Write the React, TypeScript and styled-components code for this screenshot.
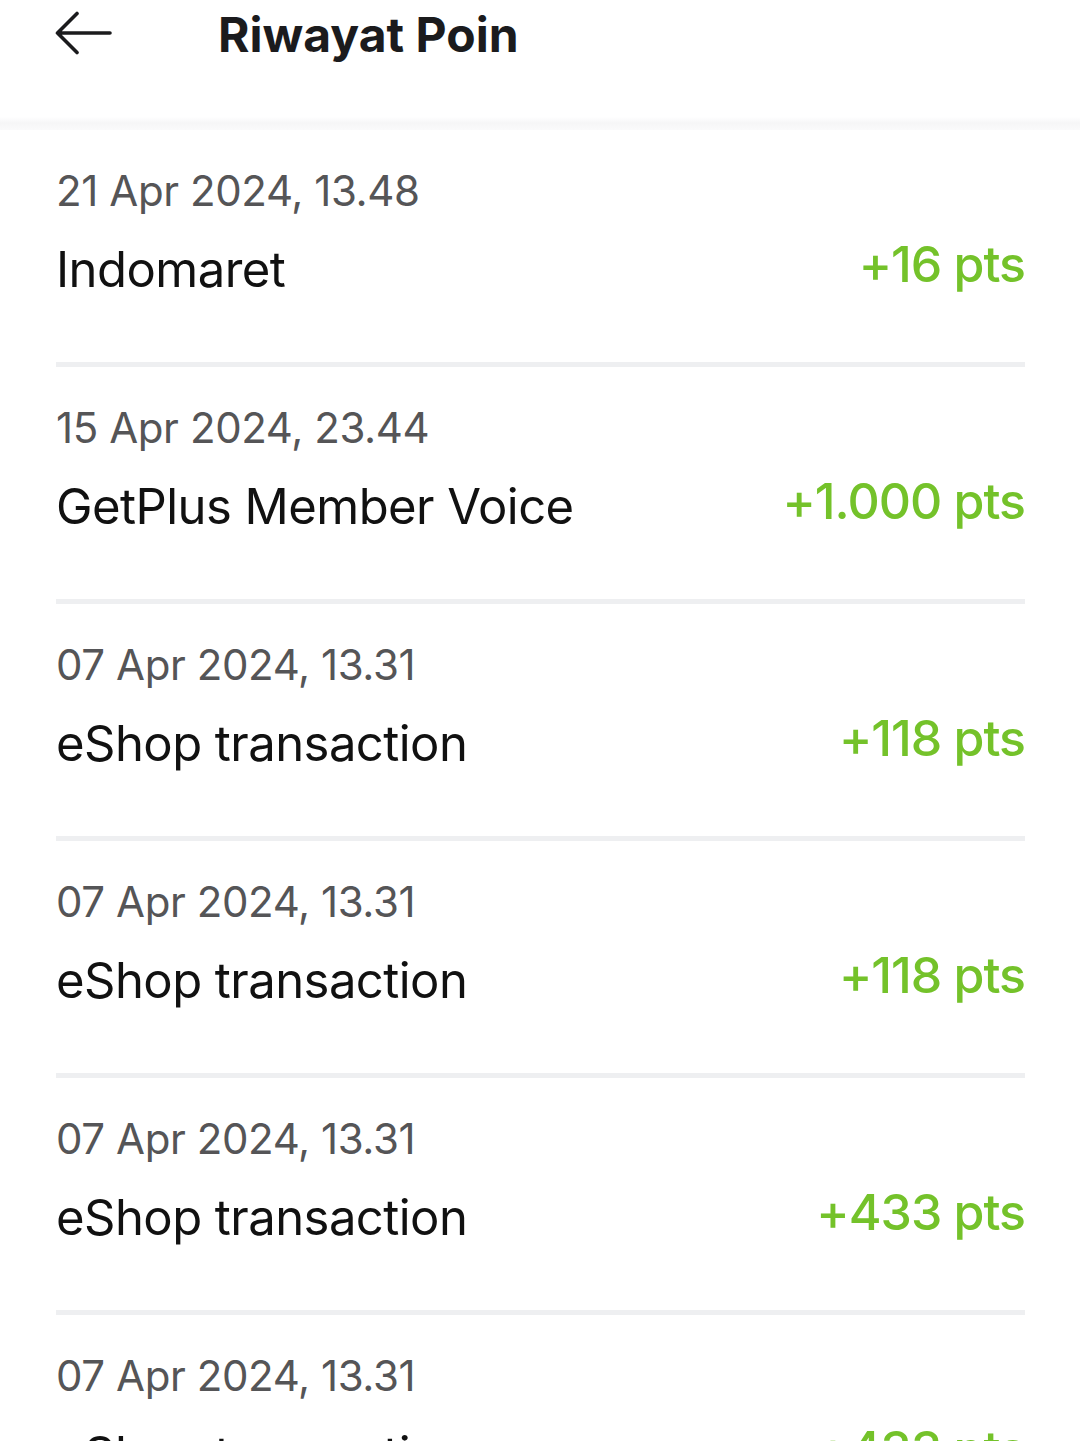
import React from "react";
import styled, { createGlobalStyle } from "styled-components";

const GlobalStyle = createGlobalStyle`
  html, body {
    margin: 0;
    padding: 0;
    background: #fff;
  }
  body {
    font-family: Inter, "Noto Sans", sans-serif;
    -webkit-font-smoothing: antialiased;
  }
`;

const Page = styled.div`
  width: 1080px;
  height: 1441px;
  overflow: hidden;
  background: #fff;
`;

const Header = styled.header`
  height: 130px;
  display: flex;
  align-items: flex-start;
  padding: 0 0 0 55px;
  box-sizing: border-box;
  background: linear-gradient(
    to bottom,
    #fff 0,
    #fff 117px,
    #f6f6f7 123px,
    #fafafb 130px
  );
`;

const BackButton = styled.button`
  border: none;
  background: none;
  padding: 0;
  margin-top: 11px;
  width: 58px;
  height: 44px;
  display: flex;
  align-items: center;
  cursor: pointer;
`;

const Title = styled.h1`
  margin: 0 0 0 105px;
  font-size: 48px;
  line-height: 70px;
  font-weight: 700;
  color: #1b1b1d;
`;

const List = styled.ul`
  list-style: none;
  margin: 0;
  padding: 0 55px 0 56px;
`;

const Item = styled.li`
  height: 237px;
  box-sizing: border-box;
  padding-top: 33px;
  border-bottom: 5px solid #eeeff1;
`;

const DateText = styled.div`
  font-size: 42px;
  line-height: 56px;
  color: #555557;
  letter-spacing: -0.4px;
`;

const Row = styled.div`
  margin-top: 20px;
  display: flex;
  justify-content: space-between;
  align-items: flex-start;
`;

const Name = styled.div`
  font-size: 49px;
  line-height: 62px;
  color: #111;
  letter-spacing: -0.55px;
`;

const Points = styled.div`
  font-size: 50px;
  line-height: 50px;
  font-weight: 500;
  color: #74c22a;
  letter-spacing: -1px;
`;

const entries = [
  { date: "21 Apr 2024, 13.48", name: "Indomaret", pts: "+16 pts" },
  { date: "15 Apr 2024, 23.44", name: "GetPlus Member Voice", pts: "+1.000 pts" },
  { date: "07 Apr 2024, 13.31", name: "eShop transaction", pts: "+118 pts" },
  { date: "07 Apr 2024, 13.31", name: "eShop transaction", pts: "+118 pts" },
  { date: "07 Apr 2024, 13.31", name: "eShop transaction", pts: "+433 pts" },
  { date: "07 Apr 2024, 13.31", name: "eShop transaction", pts: "+433 pts" },
];

const BackArrow = () => (
  <svg width="58" height="44" viewBox="0 0 58 44" fill="none">
    <path
      d="M55 22H2.5M22 2.5L2.5 22L22 41.5"
      stroke="#1b1b1d"
      strokeWidth="3.6"
      strokeLinecap="round"
      strokeLinejoin="round"
    />
  </svg>
);

export default function App() {
  return (
    <Page>
      <GlobalStyle />
      <Header>
        <BackButton aria-label="Kembali">
          <BackArrow />
        </BackButton>
        <Title>Riwayat Poin</Title>
      </Header>
      <List>
        {entries.map((e, i) => (
          <Item key={i}>
            <DateText>{e.date}</DateText>
            <Row>
              <Name>{e.name}</Name>
              <Points>{e.pts}</Points>
            </Row>
          </Item>
        ))}
      </List>
    </Page>
  );
}
